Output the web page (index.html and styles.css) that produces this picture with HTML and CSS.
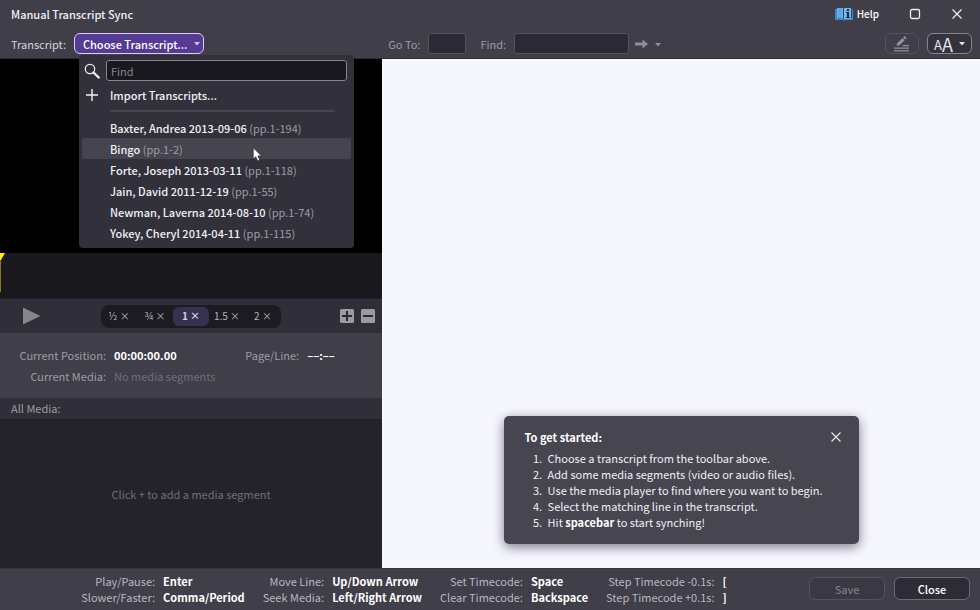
FILE: index.html
```html
<!DOCTYPE html>
<html lang="en">
<head>
<meta charset="UTF-8">
<meta name="viewport" content="width=device-width, initial-scale=1.0">
<title>Manual Transcript Sync</title>
<link rel="stylesheet" href="styles.css">
</head>
<body>

<div class="window">
  <header class="header">
    <div class="titlebar">
      <h1 class="title">Manual Transcript Sync</h1>
      <a class="help" href="#help">
        <svg width="18" height="14" viewBox="0 0 18 14">
          <path d="M0 2h2v9h6l1 1 1-1h7V2h1v11h-8l-1 1-1-1H0z" fill="#3f86c4"/>
          <path d="M2 1l6 0v10H2z" fill="#6cb8f5"/>
          <path d="M4 1v10M6 1v10" stroke="#4a9be0"/>
          <path d="M9 1h7v11H9z" fill="#6cb8f5"/>
          <path d="M12 2h2v2h-2zM11 5h3v5h1v1h-4v-1h1V6h-1z" fill="#1c2c44"/>
        </svg>
        Help
      </a>
      <button class="window-button" type="button" aria-label="Maximize">
        <svg width="12" height="12" viewBox="0 0 12 12"><rect x="1.5" y="1.5" width="9" height="9" rx="1.5" fill="none" stroke="#f0f0f5" stroke-width="1.3"/></svg>
      </button>
      <button class="window-button" type="button" aria-label="Close window">
        <svg width="12" height="12" viewBox="0 0 12 12"><path d="M1.5 1.5l9 9M10.5 1.5l-9 9" stroke="#f0f0f5" stroke-width="1.2"/></svg>
      </button>
    </div>

    <div class="toolbar">
      <div class="toolbar-left">
        <span>Transcript:</span>
        <div class="picker">
          <button class="picker-button" type="button" aria-expanded="true">
            Choose Transcript...
            <svg width="6" height="4" viewBox="0 0 6 4"><path d="M0 0h6L3 3.5z" fill="#cfc3f0"/></svg>
          </button>
          <div class="menu">
            <div class="menu-find">
              <svg width="16" height="16" viewBox="0 0 16 16" fill="none" stroke="#f0f0f5"><circle cx="6" cy="6" r="4.7" stroke-width="1.3"/><path d="M9.5 9.5l5.2 5" stroke-width="2.4" stroke-linecap="round"/></svg>
              <input class="field menu-input" type="text" placeholder="Find" aria-label="Find transcript">
            </div>
            <button class="menu-import" type="button">
              <svg width="12" height="12" viewBox="0 0 12 12"><path d="M6 0v12M0 6h12" stroke="#f0f0f5" stroke-width="1.4"/></svg>
              Import Transcripts...
            </button>
            <hr class="menu-line">
            <ul class="menu-list">
              <li><button class="menu-item" type="button">Baxter, Andrea 2013-09-06 <span>(pp.1-194)</span></button></li>
              <li><button class="menu-item active" type="button">Bingo <span>(pp.1-2)</span></button></li>
              <li><button class="menu-item" type="button">Forte, Joseph 2013-03-11 <span>(pp.1-118)</span></button></li>
              <li><button class="menu-item" type="button">Jain, David 2011-12-19 <span>(pp.1-55)</span></button></li>
              <li><button class="menu-item" type="button">Newman, Laverna 2014-08-10 <span>(pp.1-74)</span></button></li>
              <li><button class="menu-item" type="button">Yokey, Cheryl 2014-04-11 <span>(pp.1-115)</span></button></li>
            </ul>
            <svg class="cursor" width="11" height="15" viewBox="0 0 10 14"><path d="M1 .8v10.4l2.4-2.2 1.8 4 1.9-.9-1.8-3.8h3.4z" fill="#fff" stroke="#222" stroke-width=".6"/></svg>
          </div>
        </div>
      </div>
      <div class="toolbar-right">
        <label for="goto">Go To:</label>
        <input class="field goto" id="goto" type="text">
        <label class="find-label" for="find">Find:</label>
        <input class="field find" id="find" type="text">
        <button class="next" type="button" aria-label="Find next">
          <svg width="26" height="10" viewBox="0 0 26 10" fill="#8f8f99"><path d="M0 3.5h7.5V.5L13 5 7.5 9.500v-3H0z"/><path d="M20 4h6l-3 3.500z"/></svg>
        </button>
        <button class="tool mark" type="button" aria-label="Highlight" disabled>
          <svg width="16" height="16" viewBox="0 0 16 16" fill="#92929c"><path d="M2.500 10l.8-3L8.500 2l2.200 2.200-5.200 5z"/><path d="M9.200 1.300L10.500 0l2.200 2.200-1.300 1.300z"/><path d="M9 9h6v1.200H8zM0 11.500h15v1.200H0zM0 14.200h15v1.200H0z"/></svg>
        </button>
        <button class="tool size" type="button" aria-label="Text size">
          <span class="small-a">A</span><span class="big-a">A</span>
          <svg width="6" height="4" viewBox="0 0 6 4"><path d="M0 0h6L3 3.500z" fill="#e0e0e8"/></svg>
        </button>
      </div>
    </div>
  </header>

  <main class="main">
    <section class="player">
      <div class="video"></div>
      <div class="timeline">
        <svg width="6" height="40" viewBox="0 0 6 40"><path d="M0 0h5L1 7H0z" fill="#ffee00"/><path d="M.5 7v32" stroke="#8a7a10"/></svg>
      </div>
      <div class="controls">
        <button class="icon-button play" type="button" aria-label="Play">
          <svg width="18" height="18" viewBox="0 0 18 18"><path d="M0 .5l17.500 8.500L0 17.500z" fill="#85858d"/></svg>
        </button>
        <div class="speeds">
          <label class="speed"><input type="radio" name="speed"><span>½ ×</span></label>
          <label class="speed"><input type="radio" name="speed"><span>¾ ×</span></label>
          <label class="speed"><input type="radio" name="speed" checked><span>1 ×</span></label>
          <label class="speed"><input type="radio" name="speed"><span>1.5 ×</span></label>
          <label class="speed"><input type="radio" name="speed"><span>2 ×</span></label>
        </div>
        <div class="segment-buttons">
          <button class="icon-button" type="button" aria-label="Add media">
            <svg width="14" height="14" viewBox="0 0 14 14"><rect width="14" height="14" rx="1.500" fill="#9a9aa3"/><path d="M7 2v10M2 7h10" stroke="#2a2a34" stroke-width="2"/></svg>
          </button>
          <button class="icon-button" type="button" aria-label="Remove media">
            <svg width="14" height="14" viewBox="0 0 14 14"><rect width="14" height="14" rx="1.500" fill="#9a9aa3"/><path d="M2 7h10" stroke="#2a2a34" stroke-width="2"/></svg>
          </button>
        </div>
      </div>
      <dl class="info">
        <dt>Current Position:</dt>
        <dd class="strong">00:00:00.00</dd>
        <dt>Page/Line:</dt>
        <dd class="strong">––:––</dd>
        <dt>Current Media:</dt>
        <dd class="none">No media segments</dd>
      </dl>
      <h2 class="media-title">All Media:</h2>
      <div class="media-list">Click + to add a media segment</div>
    </section>

    <section class="transcript">
      <div class="tips">
        <button class="icon-button tips-close" type="button" aria-label="Dismiss">
          <svg width="12" height="12" viewBox="0 0 12 12"><path d="M1.500 1.500l9 9M10.500 1.500l-9 9" stroke="#e8e8ee" stroke-width="1.200"/></svg>
        </button>
        <h2>To get started:</h2>
        <ol>
          <li>Choose a transcript from the toolbar above.</li>
          <li>Add some media segments (video or audio files).</li>
          <li>Use the media player to find where you want to begin.</li>
          <li>Select the matching line in the transcript.</li>
          <li>Hit <b>spacebar</b> to start synching!</li>
        </ol>
      </div>
    </section>
  </main>

  <footer class="footer">
    <div class="shortcuts">
      <dl>
        <dt>Play/Pause:</dt><dd>Enter</dd>
        <dt>Slower/Faster:</dt><dd>Comma/Period</dd>
      </dl>
      <dl>
        <dt>Move Line:</dt><dd>Up/Down Arrow</dd>
        <dt>Seek Media:</dt><dd>Left/Right Arrow</dd>
      </dl>
      <dl>
        <dt>Set Timecode:</dt><dd>Space</dd>
        <dt>Clear Timecode:</dt><dd>Backspace</dd>
      </dl>
      <dl>
        <dt>Step Timecode -0.1s:</dt><dd>[</dd>
        <dt>Step Timecode +0.1s:</dt><dd>]</dd>
      </dl>
    </div>
    <button class="button" type="button" disabled>Save</button>
    <button class="button" type="button">Close</button>
  </footer>
</div>

</body>
</html>
```
FILE: styles.css
```css
/* General Styles */
* {
  box-sizing: border-box;
}

body {
  margin: 0;
  background-color: #3f3e49;
  color: #f0f0f5;
  font-family: "Noto Sans CJK SC", "Open Sans", sans-serif;
  font-size: 11px;
  line-height: 16px;
}

button,
input {
  font: inherit;
  color: inherit;
}

button {
  padding: 0;
  border: none;
  background: none;
}

h1,
h2,
dl,
dd,
ul,
ol {
  margin: 0;
  padding: 0;
}

svg {
  display: block;
  flex: none;
}

.window {
  display: flex;
  flex-direction: column;
  min-height: 100vh;
}

/* Header */
.header {
  padding-bottom: 4px;
  border-bottom: 1px solid #2c2b35;
}

.titlebar {
  display: flex;
  align-items: center;
  height: 27px;
  padding: 0 9px 0 11px;
}

.title {
  flex: 1;
  font-size: 11px;
  font-weight: 500;
}

.help {
  display: flex;
  align-items: center;
  gap: 4px;
  margin-right: 22px;
  color: #fff;
  font-size: 10px;
  font-weight: 500;
  text-decoration: none;
}

.window-button {
  display: flex;
  justify-content: center;
  width: 28px;
  margin-left: 14px;
}

.help + .window-button {
  margin-left: 0;
}

.toolbar {
  display: flex;
  align-items: center;
  height: 27px;
  padding-top: 6px;
}

.toolbar-left {
  display: flex;
  align-items: center;
  gap: 8px;
  width: 39%;
  padding-left: 11px;
  color: #d6d6de;
}

.toolbar-right {
  display: flex;
  flex: 1;
  align-items: center;
  padding: 0 8px 0 6px;
  color: #9c9ca6;
}

.field {
  height: 21px;
  padding: 0 4px;
  border: 1px solid #53525e;
  border-radius: 3px;
  background-color: #2b2a34;
}

.goto {
  width: 38px;
  margin-left: 8px;
}

.find-label {
  margin: 0 8px 0 14px;
}

.find {
  width: 115px;
}

.next {
  margin-left: 6px;
}

.tool {
  display: flex;
  align-items: center;
  justify-content: center;
  height: 21px;
  border: 1px solid #5c5b67;
  border-radius: 6px;
}

.mark {
  width: 34px;
  margin-left: auto;
  border-color: #53525e;
}

.size {
  width: 45px;
  margin-left: 8px;
  border-color: #85848f;
  background-color: #34333d;
  color: #e6e6ec;
}

.small-a {
  padding-top: 3px;
  font-size: 13px;
}

.big-a {
  margin-right: 6px;
  font-size: 18px;
}

/* Transcript picker */
.picker {
  position: relative;
}

.picker-button {
  display: flex;
  align-items: center;
  gap: 7px;
  height: 21px;
  padding: 0 3px 0 8px;
  border: 1px solid #d9cff5;
  border-radius: 6px;
  background-color: #553b96;
  color: #fff;
  font-weight: 500;
}

.menu {
  position: absolute;
  top: 22px;
  left: 5px;
  z-index: 2;
  width: 275px;
  padding: 5px 3px;
  border-radius: 4px;
  background-color: #32313b;
  color: #f0f0f5;
  font-weight: 500;
}

.menu-find {
  display: flex;
  align-items: center;
  gap: 6px;
  padding: 0 4px 0 2px;
}

.menu-input {
  flex: 1;
  min-width: 0;
  border-color: #85848f;
  background-color: #19181e;
  font-weight: 400;
}

.menu-input::placeholder {
  color: #85858f;
}

.menu-import {
  display: flex;
  align-items: center;
  gap: 12px;
  height: 28px;
  padding-left: 4px;
  font-weight: 500;
}

.menu-line {
  height: 2px;
  margin: 1px 16px 5px 28px;
  border: none;
  background-color: #45444f;
}

.menu-list {
  list-style: none;
}

.menu-item {
  display: block;
  width: 100%;
  height: 21px;
  padding-left: 28px;
  border-radius: 2px;
  text-align: left;
  font-weight: 500;
}

.menu-item.active {
  background-color: #45444f;
}

.menu-item span {
  color: #9c9ca6;
  font-weight: 400;
}

.cursor {
  position: absolute;
  top: 92px;
  left: 173px;
}

/* Media player */
.main {
  display: flex;
  flex: 1;
}

.player {
  display: flex;
  flex-direction: column;
  width: 39%;
  background-color: #24232c;
}

.video {
  height: 194px;
  background-color: #000;
}

.timeline {
  height: 46px;
  border-bottom: 1px solid #24232b;
  background-color: #19181c;
}

.controls {
  display: flex;
  align-items: center;
  height: 34px;
  padding: 0 7px 0 23px;
  background-color: #302f39;
}

.play {
  width: 78px;
}

.icon-button {
  display: block;
}

.speeds {
  display: flex;
  height: 23px;
  padding: 2px 0;
  border-radius: 8px;
  background-color: #1c1b22;
  color: #b4b4bc;
  font-size: 10px;
}

.speed {
  display: flex;
}

.speed input {
  appearance: none;
  width: 0;
  margin: 0;
}

.speed span {
  display: flex;
  align-items: center;
  justify-content: center;
  width: 36px;
  border-radius: 6px;
}

.speed input:checked + span {
  background-color: #373051;
  color: #d4d0e2;
  font-weight: 700;
}

.segment-buttons {
  display: flex;
  gap: 7px;
  margin-left: auto;
}

.info {
  display: grid;
  grid-template-columns: 106px 1fr 90px 75px;
  align-content: start;
  row-gap: 5px;
  column-gap: 8px;
  height: 65px;
  padding-top: 14px;
  background-color: #3f3e49;
}

.info dt {
  color: #9c9ca6;
  text-align: right;
}

.info .strong {
  color: #fff;
  font-weight: 700;
}

.info .none {
  grid-column: span 3;
  color: #6f6e7a;
}

.media-title {
  height: 22px;
  padding: 2px 11px;
  border-bottom: 1px solid #1f1e26;
  background-color: #302f39;
  color: #9c9ca6;
  font-size: 11px;
  font-weight: 400;
}

.media-list {
  display: flex;
  flex: 1;
  align-items: center;
  justify-content: center;
  color: #6f6e7a;
}

/* Transcript */
.transcript {
  display: flex;
  flex: 1;
  align-items: flex-end;
  justify-content: center;
  padding: 24px;
  background-color: #f6f6ff;
}

.tips {
  position: relative;
  width: 355px;
  padding: 13px 21px 14px;
  border-radius: 5px;
  background-color: #464550;
  box-shadow: 0 3px 12px rgba(40, 38, 60, 0.6);
}

.tips h2 {
  margin-bottom: 5px;
  color: #fff;
  font-size: 11px;
  font-weight: 700;
}

.tips ol {
  padding-left: 20px;
}

.tips li {
  padding-left: 3px;
}

.tips b {
  color: #fff;
}

.tips-close {
  position: absolute;
  top: 15px;
  right: 17px;
}

/* Footer */
.footer {
  display: flex;
  align-items: center;
  gap: 9px;
  height: 42px;
  padding: 0 10px 2px 0;
  border-top: 1px solid #35343e;
}

.shortcuts {
  display: flex;
  flex: 1;
  justify-content: center;
  gap: 18px;
  padding-left: 8px;
}

.shortcuts dl {
  display: grid;
  grid-template-columns: auto auto;
  column-gap: 8px;
}

.shortcuts dt {
  color: #b8b8c2;
  text-align: right;
}

.shortcuts dd {
  color: #fff;
  font-weight: 700;
}

.button {
  width: 76px;
  height: 23px;
  border: 1px solid #6a6975;
  border-radius: 6px;
  background-color: #2d2c36;
  color: #fff;
  font-weight: 500;
}

.button:disabled {
  border-color: #53525e;
  background-color: #3a3943;
  color: #85858f;
  font-weight: 400;
}
```
